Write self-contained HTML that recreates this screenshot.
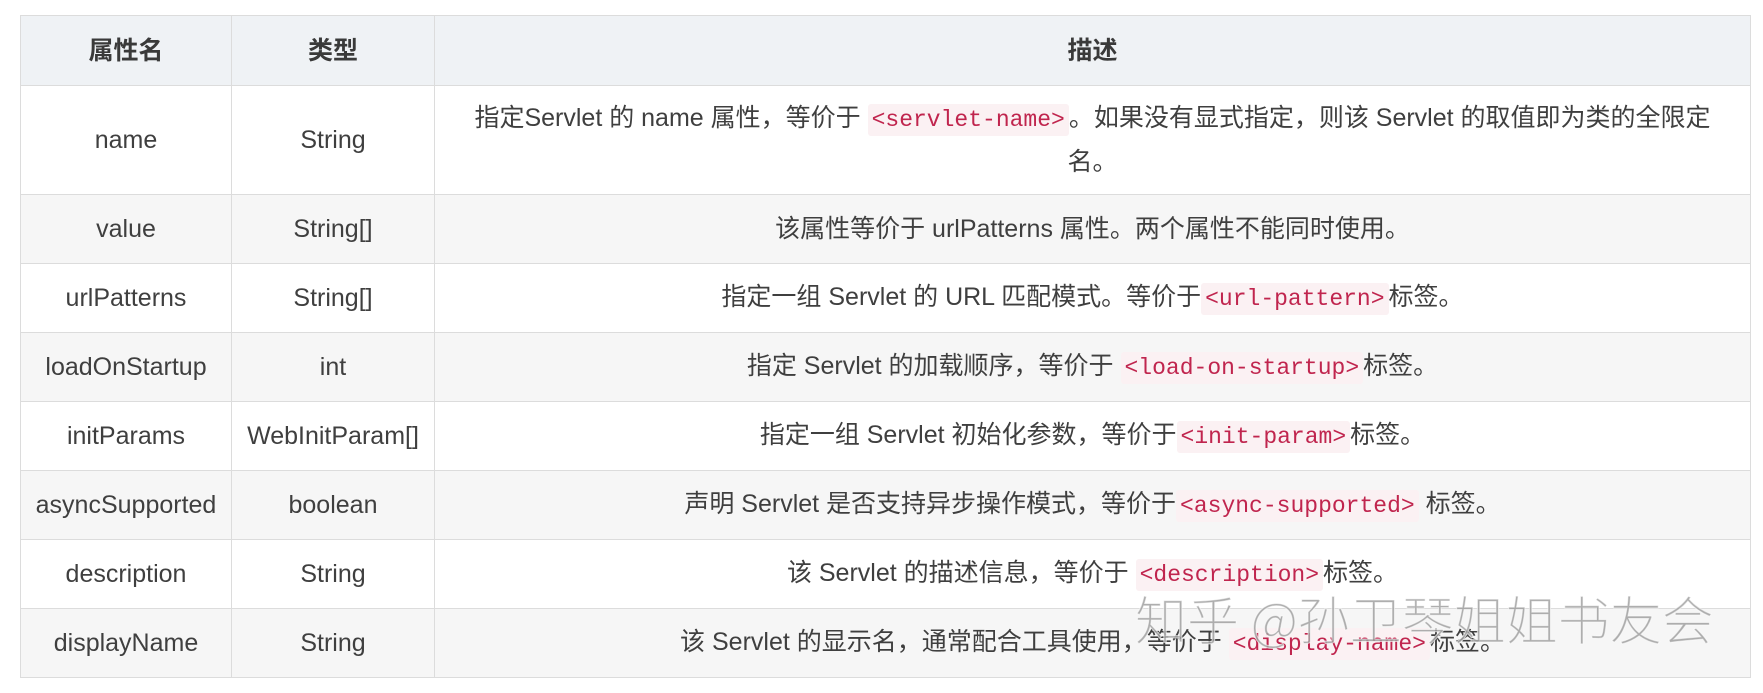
<!DOCTYPE html>
<html><head><meta charset="utf-8"><style>
html,body{margin:0;padding:0;background:#fff;width:1763px;height:693px;overflow:hidden;position:relative}
table{position:absolute;left:20px;top:15px;width:1731px;border-collapse:collapse;table-layout:fixed;font-family:"Liberation Sans","Noto Sans CJK SC",sans-serif;font-size:25px;color:#3f3f3f}
td,th{border:1px solid #dcdcdc;text-align:center;vertical-align:middle;padding:0 8px;line-height:42px;white-space:nowrap}
th{background:#eff2f5;font-weight:bold;color:#3a3a3a;height:69px}
td{height:68px}
tr.g td{background:#f6f6f6}
code{font-family:"Liberation Mono",monospace;font-size:23px;color:#c0254e;background:#fbf1f3;padding:3px 4px;border-radius:3px}
.wm{position:absolute;left:1135px;top:580px;font-family:"Noto Sans CJK SC",sans-serif;font-size:52px;color:rgba(160,160,160,0.85);-webkit-text-stroke:1px rgba(255,255,255,0.6);letter-spacing:0px;white-space:nowrap;font-weight:300}
</style></head><body>
<table>
<colgroup><col style="width:211px"><col style="width:203px"><col></colgroup>
<tr><th>属性名</th><th>类型</th><th>描述</th></tr>
<tr><td style="height:108px">name</td><td>String</td><td>指定Servlet 的 name 属性，等价于 <code>&lt;servlet-name&gt;</code>。如果没有显式指定，则该 Servlet 的取值即为类的全限定<br>名。</td></tr>
<tr class="g"><td>value</td><td>String[]</td><td>该属性等价于 urlPatterns 属性。两个属性不能同时使用。</td></tr>
<tr><td>urlPatterns</td><td>String[]</td><td>指定一组 Servlet 的 URL 匹配模式。等价于<code>&lt;url-pattern&gt;</code>标签。</td></tr>
<tr class="g"><td>loadOnStartup</td><td>int</td><td>指定 Servlet 的加载顺序，等价于 <code>&lt;load-on-startup&gt;</code>标签。</td></tr>
<tr><td>initParams</td><td>WebInitParam[]</td><td>指定一组 Servlet 初始化参数，等价于<code>&lt;init-param&gt;</code>标签。</td></tr>
<tr class="g"><td>asyncSupported</td><td>boolean</td><td>声明 Servlet 是否支持异步操作模式，等价于<code>&lt;async-supported&gt;</code> 标签。</td></tr>
<tr><td>description</td><td>String</td><td>该 Servlet 的描述信息，等价于 <code>&lt;description&gt;</code>标签。</td></tr>
<tr class="g"><td>displayName</td><td>String</td><td>该 Servlet 的显示名，通常配合工具使用，等价于 <code>&lt;display-name&gt;</code>标签。</td></tr>
</table>
<div class="wm">知乎 @孙卫琴姐姐书友会</div>
</body></html>
